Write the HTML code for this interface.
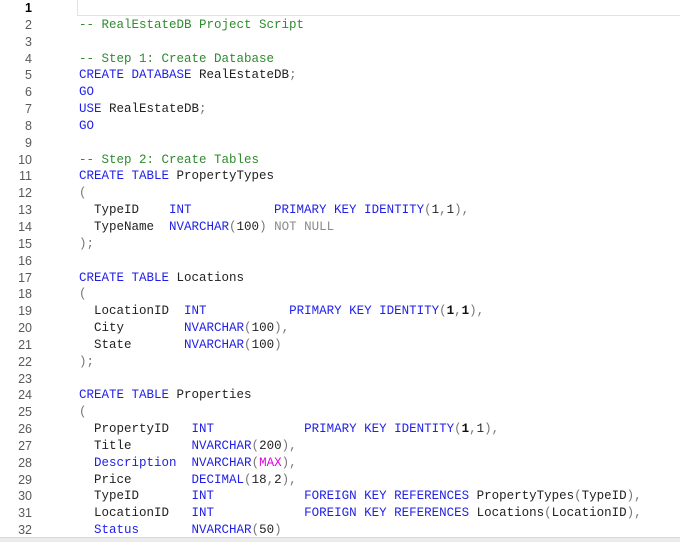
<html><head><style>
body{margin:0;background:#fff;width:680px;height:541px;overflow:hidden;position:relative;font-family:"Liberation Mono","DejaVu Sans Mono",monospace;font-size:12.5px}
.g{position:absolute;left:0;top:0;width:32px;text-align:right;line-height:16.84px;color:#5a5a5a;white-space:pre;font-family:"Liberation Sans",sans-serif;font-size:12.5px}
.c{position:absolute;left:79px;top:0;margin:0;font-family:"Liberation Mono",monospace;font-size:12.5px;line-height:16.84px;color:#222;white-space:pre}
.k{color:#1f1fe8}.m{color:#2e8b2e}.n{color:#8a8a8a}.p{color:#777}.f{color:#e000e0}.b{color:#111;font-weight:bold}
.hl{position:absolute;left:77px;top:0;width:610px;height:16px;border:1px solid #e2e2e2;border-top:none;box-sizing:border-box}
.bot{position:absolute;left:0;top:537px;width:680px;height:4px;background:#ececec;border-top:1px solid #d8d8d8}
</style></head><body>
<div class="hl"></div>
<div class="g"><b style="color:#000">1</b>
2
3
4
5
6
7
8
9
10
11
12
13
14
15
16
17
18
19
20
21
22
23
24
25
26
27
28
29
30
31
32</div>
<div class="c">&nbsp;
<span class="m">-- RealEstateDB Project Script</span>

<span class="m">-- Step 1: Create Database</span>
<span class="k">CREATE DATABASE</span> RealEstateDB<span class="p">;</span>
<span class="k">GO</span>
<span class="k">USE</span> RealEstateDB<span class="p">;</span>
<span class="k">GO</span>

<span class="m">-- Step 2: Create Tables</span>
<span class="k">CREATE TABLE</span> PropertyTypes
<span class="p">(</span>
  TypeID    <span class="k">INT</span>           <span class="k">PRIMARY KEY IDENTITY</span><span class="p">(</span>1<span class="p">,</span>1<span class="p">),</span>
  TypeName  <span class="k">NVARCHAR</span><span class="p">(</span>100<span class="p">)</span> <span class="n">NOT NULL</span>
<span class="p">);</span>

<span class="k">CREATE TABLE</span> Locations
<span class="p">(</span>
  LocationID  <span class="k">INT</span>           <span class="k">PRIMARY KEY IDENTITY</span><span class="p">(</span><span class="b">1</span><span class="p">,</span><span class="b">1</span><span class="p">),</span>
  City        <span class="k">NVARCHAR</span><span class="p">(</span>100<span class="p">),</span>
  State       <span class="k">NVARCHAR</span><span class="p">(</span>100<span class="p">)</span>
<span class="p">);</span>

<span class="k">CREATE TABLE</span> Properties
<span class="p">(</span>
  PropertyID   <span class="k">INT</span>            <span class="k">PRIMARY KEY IDENTITY</span><span class="p">(</span><span class="b">1</span><span class="p">,</span>1<span class="p">),</span>
  Title        <span class="k">NVARCHAR</span><span class="p">(</span>200<span class="p">),</span>
  <span class="k">Description</span>  <span class="k">NVARCHAR</span><span class="p">(</span><span class="f">MAX</span><span class="p">),</span>
  Price        <span class="k">DECIMAL</span><span class="p">(</span>18<span class="p">,</span>2<span class="p">),</span>
  TypeID       <span class="k">INT</span>            <span class="k">FOREIGN KEY REFERENCES</span> PropertyTypes<span class="p">(</span>TypeID<span class="p">),</span>
  LocationID   <span class="k">INT</span>            <span class="k">FOREIGN KEY REFERENCES</span> Locations<span class="p">(</span>LocationID<span class="p">),</span>
  <span class="k">Status</span>       <span class="k">NVARCHAR</span><span class="p">(</span>50<span class="p">)</span></div>
<div class="bot"></div>
</body></html>
